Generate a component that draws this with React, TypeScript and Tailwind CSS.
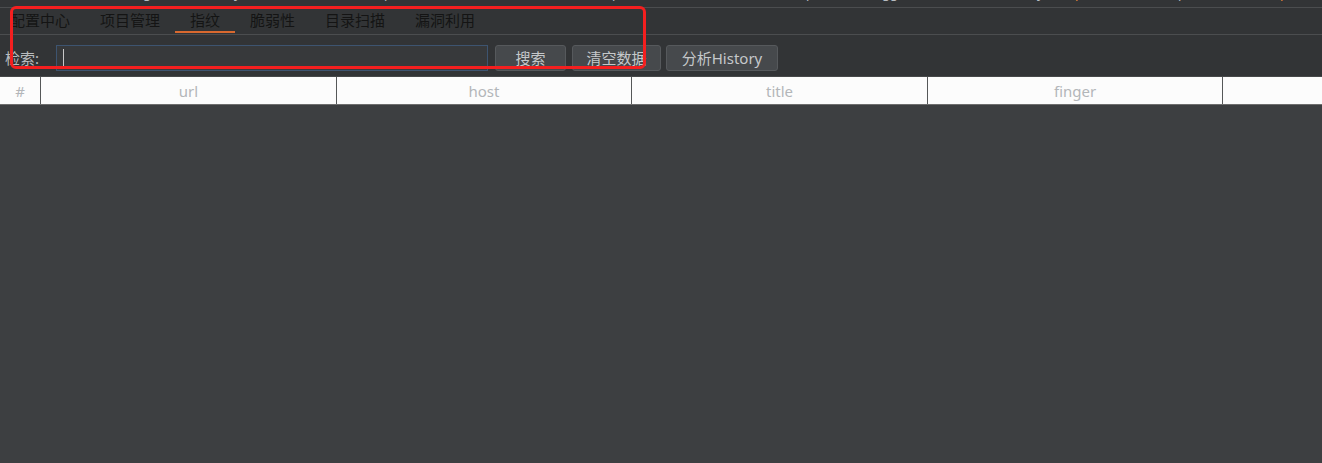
import React from 'react';

const tabs = ['配置中心', '项目管理', '指纹', '脆弱性', '目录扫描', '漏洞利用'];
const columns = [
  { name: '#', w: 'w-[40px]' },
  { name: 'url', w: 'w-[296px]' },
  { name: 'host', w: 'w-[295px]' },
  { name: 'title', w: 'w-[296px]' },
  { name: 'finger', w: 'w-[295px]' },
  { name: '', w: 'flex-1' },
];

// descender fragments of the cut-off tab row above
const fragments = [
  { x: 143, c: 'g', orange: false },
  { x: 234, c: 'y', orange: false },
  { x: 384, c: 'p', orange: false },
  { x: 612, c: 'p', orange: false },
  { x: 806, c: 'p', orange: false },
  { x: 882, c: 'gg', orange: false },
  { x: 1037, c: 'y', orange: false },
  { x: 1075, c: 'p', orange: true },
  { x: 1178, c: 'p', orange: false },
  { x: 1280, c: 'p', orange: true },
];

export default function App() {
  return (
    <div
      className="relative w-[1322px] h-[463px] overflow-hidden bg-[#3d3f41] text-[15px]"
      style={{ fontFamily: '"Noto Sans", "Noto Sans CJK SC", sans-serif' }}
    >
      {/* top strip */}
      <div className="relative h-[8px] bg-[#323436] border-b border-[#4b4d4f] overflow-hidden">
        {fragments.map((f, i) => (
          <span
            key={i}
            className={`absolute top-[-13px] text-[13px] leading-none ${f.orange ? 'text-[#e3893a]' : 'text-[#b8bcc0]'}`}
            style={{ left: f.x }}
          >
            {f.c}
          </span>
        ))}
      </div>

      {/* tab row */}
      <div className="flex h-[27px] bg-[#323436] border-b border-[#4b4d4f]">
        <div className="flex ml-[-5px]">
          {tabs.map((t) => (
            <div key={t} className="relative px-[15px] flex items-center text-[15px] text-[#141414]">
              <span className="leading-none mt-[-1px]">{t}</span>
              {t === '指纹' && (
                <span className="absolute left-0 right-0 bottom-[1px] h-[2px] bg-[#d9692f]" />
              )}
            </div>
          ))}
        </div>
      </div>

      {/* search row */}
      <div className="flex items-start h-[41px] bg-[#323436] pl-[5px] pt-[10px]">
        <span className="text-[#b9bcbf] w-[51px] h-[26px] leading-[26px]">检索:</span>
        <div className="flex items-center w-[432px] h-[26px] border border-[#3d5470] bg-[#37393b] pl-[6px]">
          <span className="w-px h-[18px] bg-[#c8c8c8]" />
        </div>
        <button className="ml-[7px] w-[71px] h-[26px] rounded-[3px] border border-[#56595c] bg-[#46494c] text-[#c5c8ca] leading-none">
          搜索
        </button>
        <button className="ml-[6px] w-[89px] h-[26px] rounded-[3px] border border-[#56595c] bg-[#46494c] text-[#c5c8ca] leading-none">
          清空数据
        </button>
        <button className="ml-[5px] w-[112px] h-[26px] rounded-[3px] border border-[#56595c] bg-[#46494c] text-[#c5c8ca] leading-none">
          分析History
        </button>
      </div>

      {/* table header */}
      <div className="flex h-[29px] bg-[#fcfcfc] border-t border-[#464849] border-b border-b-[#6e6e6e]">
        {columns.map((c, i) => (
          <div
            key={i}
            className={`${c.w} flex items-center justify-center pt-[2px] text-[#b3b6b9] ${i > 0 ? 'border-l border-[#555758]' : ''}`}
          >
            {c.name}
          </div>
        ))}
      </div>

      {/* red annotation box */}
      <div className="absolute left-[10px] top-[6px] w-[636px] h-[63px] rounded-[6px] border-[3px] border-[#f41f1f] pointer-events-none" />
    </div>
  );
}
